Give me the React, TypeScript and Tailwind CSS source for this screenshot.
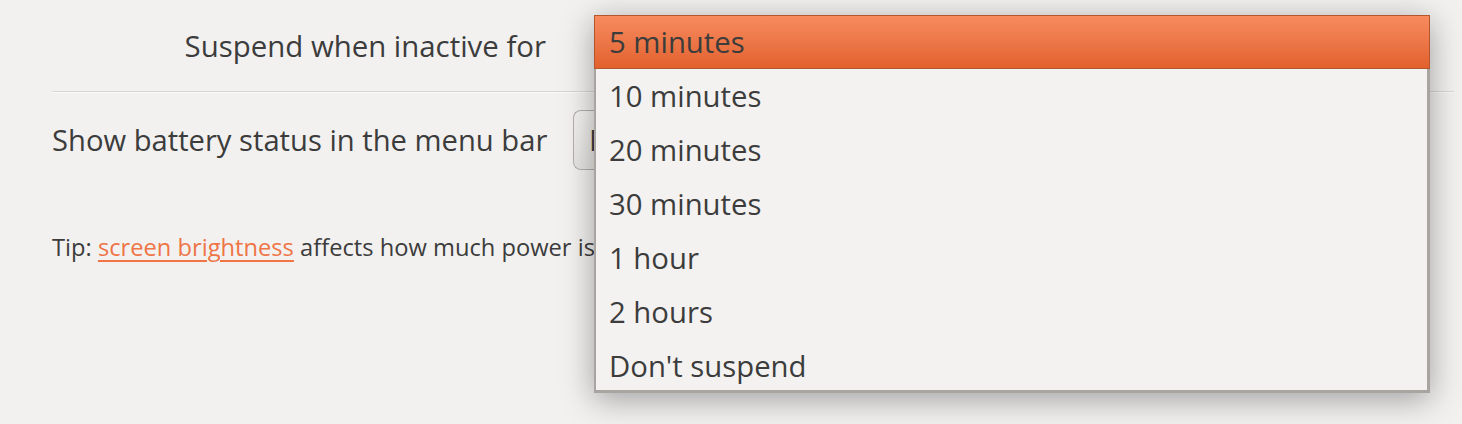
import React from "react";

const items = ["5 minutes", "10 minutes", "20 minutes", "30 minutes", "1 hour", "2 hours", "Don't suspend"];

export default function App() {
  return (
    <div
      className="relative w-[1462px] h-[424px] overflow-hidden bg-[#f2f1f0] text-[#3c3c3c]"
      style={{ fontFamily: '"Open Sans", "Noto Sans", sans-serif' }}
    >
      <div className="pl-[52px] pr-[8px] pt-[16px]">
        <div className="flex h-[60px] items-center">
          <div className="w-[494px] whitespace-nowrap text-right text-[29.4px] leading-[40px]">Suspend when inactive for</div>
        </div>
        <div className="mt-[15px] h-[2px] border-t border-[#d8d6d3] bg-[#fbfafa]" />
        <div className="mt-[17px] flex h-[60px] items-center">
          <div className="w-[494px] whitespace-nowrap text-[29.2px] leading-[40px]">Show battery status in the menu bar</div>
          <div className="ml-[27px] flex h-[60px] w-[24px] items-center overflow-hidden rounded-l-[8px] border-y border-l border-[#b4b1ac] bg-gradient-to-b from-[#f4f3f1] to-[#e6e5e2] pl-[15px] text-[29.2px] leading-[40px]">
            <span className="block w-[5px] overflow-hidden">N</span>
          </div>
        </div>
        <div className="mt-[61px] whitespace-nowrap text-[23.7px] leading-[33px]">
          Tip:{" "}
          <span className="text-[#ef7446] underline decoration-[2px] underline-offset-[4px]">screen brightness</span>{" "}
          affects how much power is
        </div>
      </div>

      <div className="absolute left-[594px] top-[15px] h-[378px] w-[836px] border-b-[3px] border-l-2 border-r-[3px] border-[#a8a5a1] bg-[#f3f2f0] shadow-[0_6px_30px_rgba(0,0,0,0.35)]">
        {items.map((it, i) =>
          i === 0 ? (
            <div
              key={it}
              className="-ml-[2px] -mr-[3px] flex h-[54px] items-center border border-[#b5552e] bg-gradient-to-b from-[#f78b5e] to-[#e2612d] pl-[14px] text-[29.3px] leading-[54px]"
            >
              {it}
            </div>
          ) : (
            <div
              key={it}
              className={`${i === items.length - 1 ? "h-[51px]" : "h-[54px]"} pl-[13px] text-[29.3px] leading-[54px] whitespace-nowrap`}
            >
              {it}
            </div>
          )
        )}
      </div>
    </div>
  );
}
